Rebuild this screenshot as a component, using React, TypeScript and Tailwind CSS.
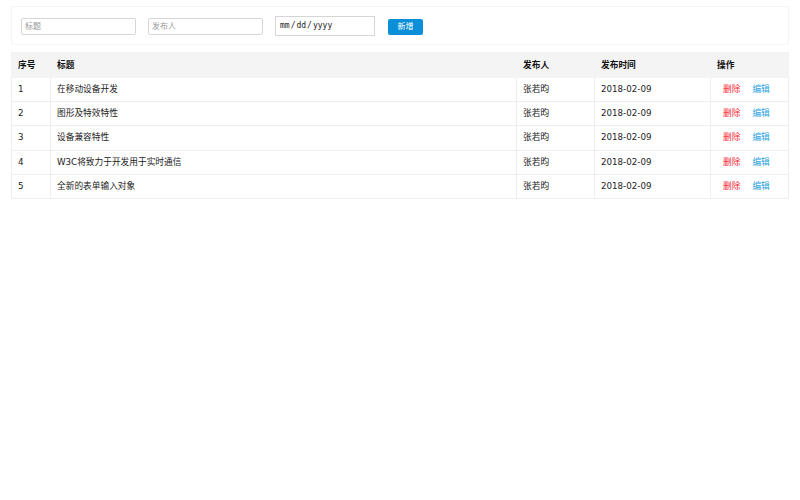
const rows = ["在移动设备开发", "图形及特效特性", "设备兼容特性", "W3C将致力于开发用于实时通信", "全新的表单输入对象"];
const font = { fontFamily: '"DejaVu Sans","Noto Sans CJK SC",sans-serif' };
const th = "border border-[#f3f3f3] px-[6px] pt-[1px] h-[24.5px] text-left text-[8.7px] font-bold text-[#111]";
const td = "border border-[#efefef] px-[6px] h-[24.4px] text-[8.7px] text-[#222]";
const inp = "mt-[2px] h-[17px] w-[115px] rounded-[2px] border border-[#d6d6d6] px-[3px] text-[8px] outline-none placeholder:text-[#999]";

export default function App() {
  return (
    <div className="min-h-[500px] bg-white pl-[11px] pr-[11px] pt-[6px]" style={font}>
      <div className="flex h-[39px] items-center gap-[12px] rounded-[2px] border border-[#f4f4f4] pl-[9px]">
        <input placeholder="标题" className={inp} />
        <input placeholder="发布人" className={inp} />
        <input type="date" className="h-[20px] w-[100px] border border-[#d6d6d6] px-[3px] font-['DejaVu_Sans_Mono'] text-[8px] text-[#222] outline-none [&::-webkit-calendar-picker-indicator]:hidden" />
        <button className="ml-[1px] mt-[2px] h-[16px] w-[35px] rounded-[2px] bg-[#0a8fd8] text-[8px] text-white">新增</button>
      </div>
      <table className="mt-[7px] w-[777px] table-fixed border-collapse">
        <colgroup>
          <col className="w-[39px]" />
          <col className="w-[466px]" />
          <col className="w-[78px]" />
          <col className="w-[116px]" />
          <col className="w-[78px]" />
        </colgroup>
        <thead>
          <tr className="bg-[#f4f4f4]">
            {["序号", "标题", "发布人", "发布时间", "操作"].map((h) => (
              <th key={h} className={th}>{h}</th>
            ))}
          </tr>
        </thead>
        <tbody>
          {rows.map((r, i) => (
            <tr key={r}>
              <td className={td}>{i + 1}</td>
              <td className={td}>{r}</td>
              <td className={td}>张若昀</td>
              <td className={td}>2018-02-09</td>
              <td className={td}>
                <div className="flex gap-[12px] pl-[6px]">
                  <span className="text-[#f5222d]">删除</span>
                  <span className="text-[#2a9fe0]">编辑</span>
                </div>
              </td>
            </tr>
          ))}
        </tbody>
      </table>
    </div>
  );
}
